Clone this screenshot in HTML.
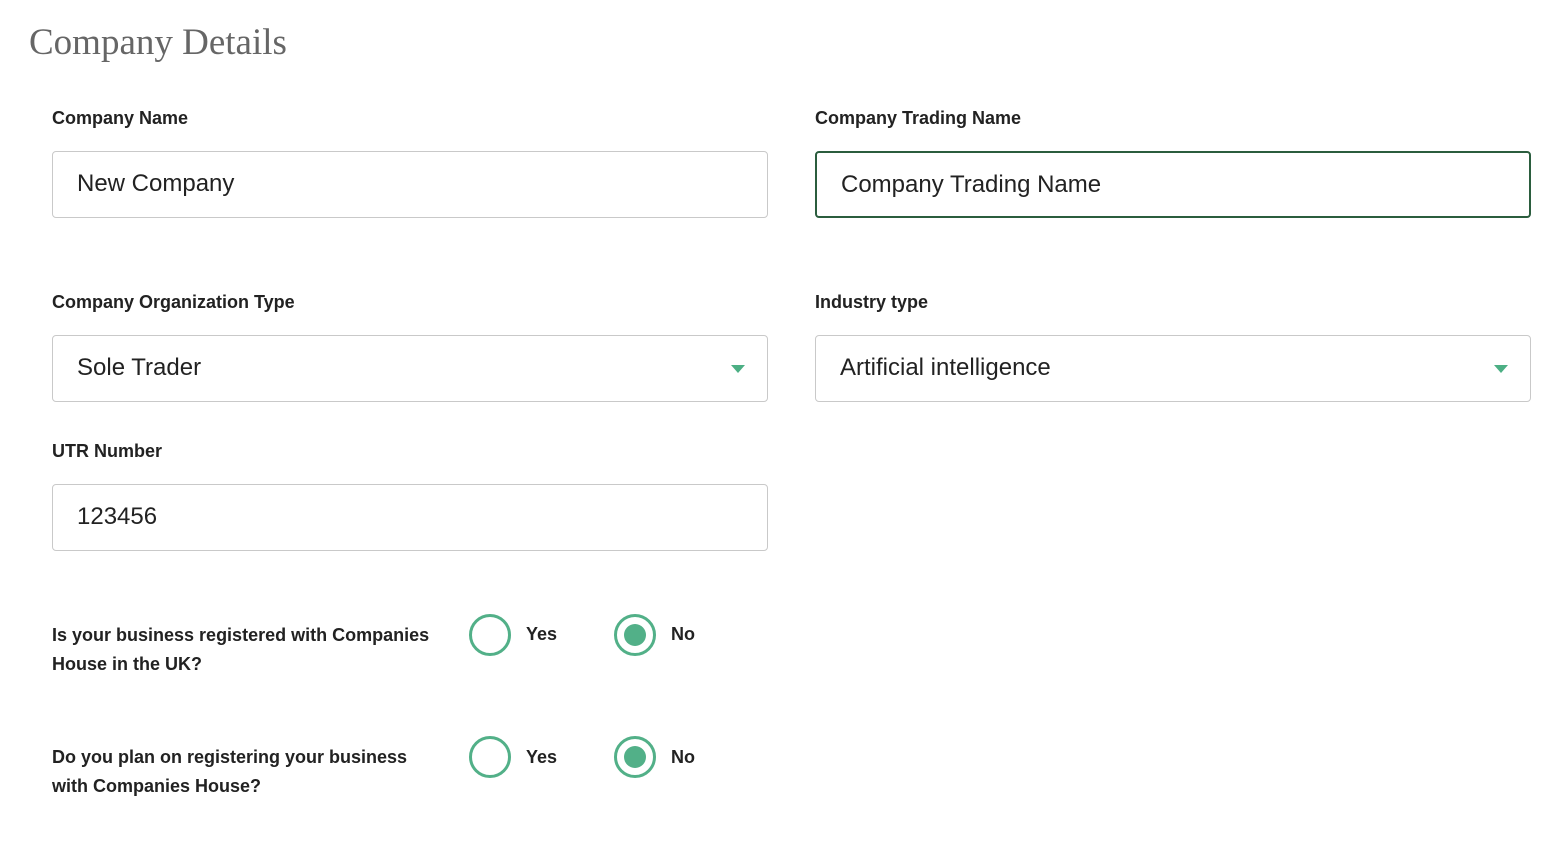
<!DOCTYPE html>
<html><head><style>
body{margin:0;width:1568px;height:852px;background:#fff;font-family:"Liberation Sans",sans-serif;color:#1a1a1a;position:relative;overflow:hidden}
.h{position:absolute;left:29px;top:21px;font-family:"Liberation Serif",serif;font-size:37px;color:#666}
.l{position:absolute;font-size:18px;font-weight:bold;color:#222}
.i{position:absolute;box-sizing:border-box;width:716px;height:67px;border:1.5px solid #c9c9c9;border-radius:4px;font-size:24px;padding-left:24px;line-height:64px;color:#222}
.f{border:2px solid #2b5d3e}
.arr{position:absolute;right:22px;top:29px;width:0;height:0;border-left:7px solid transparent;border-right:7px solid transparent;border-top:8px solid #4caf84}
.r{position:absolute;width:36px;height:36px;border:3px solid #52b088;border-radius:50%;box-sizing:content-box}
.r.on::after{content:"";position:absolute;left:7px;top:7px;width:22px;height:22px;border-radius:50%;background:#52b088}
.t{position:absolute;font-size:18px;font-weight:bold;color:#222}
</style></head><body>
<div class="h">Company Details</div>
<div class="l" style="left:52px;top:108px">Company Name</div>
<div class="i" style="left:52px;top:151px">New Company</div>
<div class="l" style="left:815px;top:108px">Company Trading Name</div>
<div class="i f" style="left:815px;top:151px">Company Trading Name</div>
<div class="l" style="left:52px;top:292px">Company Organization Type</div>
<div class="i" style="left:52px;top:335px">Sole Trader<div class="arr"></div></div>
<div class="l" style="left:815px;top:292px">Industry type</div>
<div class="i" style="left:815px;top:335px">Artificial intelligence<div class="arr"></div></div>
<div class="l" style="left:52px;top:441px">UTR Number</div>
<div class="i" style="left:52px;top:484px">123456</div>
<div class="l" style="left:52px;top:621px;line-height:29px;width:400px">Is your business registered with Companies<br>House in the UK?</div>
<div class="r" style="left:469px;top:614px"></div><div class="t" style="left:526px;top:624px">Yes</div>
<div class="r on" style="left:614px;top:614px"></div><div class="t" style="left:671px;top:624px">No</div>
<div class="l" style="left:52px;top:743px;line-height:29px;width:400px">Do you plan on registering your business<br>with Companies House?</div>
<div class="r" style="left:469px;top:736px"></div><div class="t" style="left:526px;top:747px">Yes</div>
<div class="r on" style="left:614px;top:736px"></div><div class="t" style="left:671px;top:747px">No</div>
</body></html>
